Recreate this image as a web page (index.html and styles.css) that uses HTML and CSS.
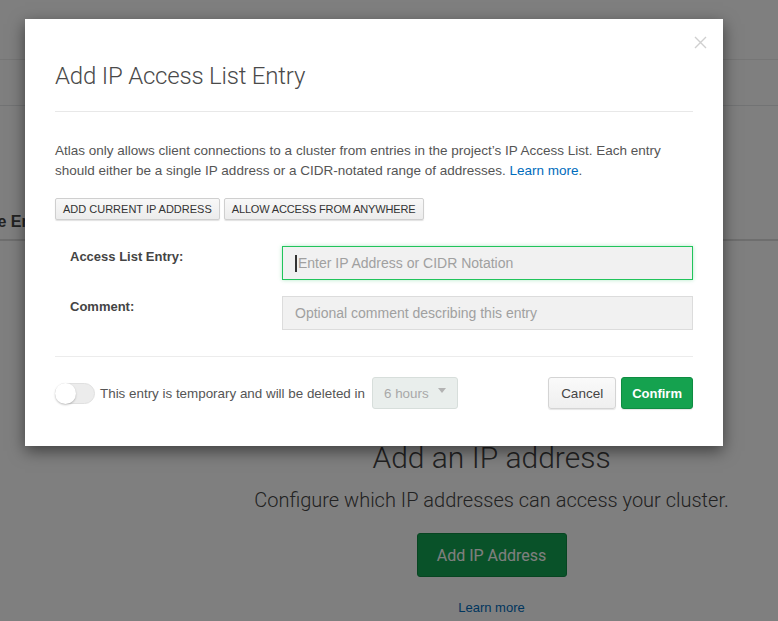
FILE: index.html
```html
<!DOCTYPE html>
<html lang="en">
  <head>
    <meta charset="UTF-8" />
    <meta name="viewport" content="width=device-width, initial-scale=1.0" />
    <title>Network Access</title>
    <link rel="stylesheet" href="styles.css">
  </head>
  <body>
    <div class="page">
      <div class="topbar"></div>
      <div class="subbar"></div>
      <div class="tabs">
        <span class="tab">Private Endpoint</span>
      </div>
      <section class="empty">
        <h2>Add an IP address</h2>
        <p>Configure which IP addresses can access your cluster.</p>
        <button class="big-btn">Add IP Address</button>
        <a href="#" class="empty-link">Learn more</a>
      </section>
    </div>

    <div class="backdrop"></div>

    <div class="modal">
      <button class="close" aria-label="Close">
        <svg width="13" height="13" viewBox="0 0 13 13">
          <path d="M1 1 L12 12 M12 1 L1 12" stroke="#cfcfcf" stroke-width="1.4" fill="none" />
        </svg>
      </button>
      <header class="modal-head">
        <h1>Add IP Access List Entry</h1>
      </header>
      <div class="modal-body">
        <p class="intro">
          Atlas only allows client connections to a cluster from entries in the project’s IP Access List. Each entry
          should either be a single IP address or a CIDR-notated range of addresses. <a href="#">Learn more</a>.
        </p>
        <div class="quick">
          <button class="small-btn">Add current IP address</button>
          <button class="small-btn">Allow access from anywhere</button>
        </div>
        <div class="field">
          <label for="entry">Access List Entry:</label>
          <div class="input focus"><span class="caret"></span><span class="ph">Enter IP Address or CIDR Notation</span></div>
        </div>
        <div class="field">
          <label for="comment">Comment:</label>
          <div class="input"><span class="ph">Optional comment describing this entry</span></div>
        </div>
      </div>
      <footer class="modal-foot">
        <div class="temp">
          <span class="toggle"><span class="knob"></span></span>
          <span class="temp-text">This entry is temporary and will be deleted in</span>
          <span class="select">6 hours <span class="arrow"></span></span>
        </div>
        <div class="actions">
          <button class="btn">Cancel</button>
          <button class="btn primary">Confirm</button>
        </div>
      </footer>
    </div>
  </body>
</html>
```

FILE: styles.css
```css
* {
  box-sizing: border-box;
  margin: 0;
}
html,
body {
  height: 100%;
}
body {
  font-family: "Liberation Sans", Arial, sans-serif;
  background: #fff;
  overflow: hidden;
  position: relative;
}
button {
  font-family: inherit;
  cursor: pointer;
}

/* page behind the modal */
.topbar {
  height: 60px;
  border-bottom: 1px solid #ececec;
}
.subbar {
  height: 46px;
  border-bottom: 1px solid #e4e6e8;
}
.tabs {
  height: 135px;
  display: flex;
  align-items: flex-end;
  border-bottom: 2px solid #dcdcdc;
  padding-bottom: 8px;
}
.tab {
  margin-left: -47px;
  font-size: 16px;
  font-weight: bold;
  color: #444;
  white-space: nowrap;
}
.empty {
  padding-left: 205px;
  padding-top: 199px;
  display: flex;
  flex-direction: column;
  align-items: center;
  text-align: center;
}
.empty h2 {
  font-family: Roboto, sans-serif;
  font-weight: 300;
  font-size: 30px;
  color: #444;
  line-height: 36px;
}
.empty p {
  font-family: Roboto, sans-serif;
  font-weight: 300;
  font-size: 20px;
  color: #444;
  margin-top: 12px;
}
.big-btn {
  margin-top: 21px;
  width: 150px;
  height: 44px;
  background: #13a552;
  border: 1px solid #0f8a43;
  border-radius: 3px;
  color: #fff;
  font-family: Roboto, sans-serif;
  font-size: 16px;
}
.empty-link {
  margin-top: 23px;
  font-size: 13px;
  color: #006cbc;
  text-decoration: none;
}

.backdrop {
  position: absolute;
  inset: 0;
  background: rgba(0, 0, 0, 0.5);
}

/* modal */
.modal {
  position: absolute;
  top: 19px;
  left: 25px;
  width: 698px;
  background: #fff;
  padding: 0 30px 37px;
  box-shadow: 0 5px 15px rgba(0, 0, 0, 0.5);
}
.close {
  position: absolute;
  top: 17px;
  right: 16px;
  border: 0;
  background: none;
  padding: 0;
  line-height: 0;
}
.modal-head {
  padding-top: 42px;
  padding-bottom: 20px;
  border-bottom: 1px solid #e8e8e8;
}
.modal-head h1 {
  font-family: Roboto, sans-serif;
  font-weight: 300;
  font-size: 24px;
  letter-spacing: -0.2px;
  line-height: 30px;
  color: #4a4a4a;
}
.modal-body {
  padding-top: 29px;
  padding-bottom: 26px;
  border-bottom: 1px solid #ececec;
}
.intro {
  font-size: 13.5px;
  line-height: 20px;
  color: #555;
}
.intro a {
  color: #006cbc;
  text-decoration: none;
}
.quick {
  display: flex;
  gap: 4px;
  margin-top: 17px;
  margin-bottom: 26px;
}
.small-btn {
  height: 22px;
  padding: 0 7px;
  font-size: 11px;
  text-transform: uppercase;
  color: #333;
  background: linear-gradient(#f8f8f8, #ececec);
  border: 1px solid #cfcfcf;
  border-radius: 2px;
  box-shadow: 0 1px 1px rgba(0, 0, 0, 0.12);
}
.small-btn + .small-btn {
  letter-spacing: -0.15px;
}
.field {
  display: flex;
}
.field + .field {
  margin-top: 16px;
}
.field label {
  width: 227px;
  padding-left: 15px;
  padding-top: 3px;
  font-size: 13px;
  font-weight: bold;
  color: #444;
}
.input {
  flex: 1;
  height: 34px;
  display: flex;
  align-items: center;
  padding-left: 12px;
  background: #f1f1f1;
  border: 1px solid #dcdcdc;
  font-size: 14px;
}
.input.focus {
  border-color: #21c45b;
  box-shadow: 0 0 4px rgba(33, 196, 91, 0.35);
}
.caret {
  width: 2px;
  height: 17px;
  background: #333;
  margin-right: 1px;
}
.ph {
  color: #a0a0a0;
}
.modal-foot {
  padding-top: 20px;
  display: flex;
  align-items: center;
  justify-content: space-between;
}
.temp {
  display: flex;
  align-items: center;
}
.toggle {
  width: 40px;
  height: 21px;
  border-radius: 11px;
  background: #ececec;
  border: 1px solid #e0e0e0;
  position: relative;
}
.knob {
  position: absolute;
  top: -1px;
  left: -1px;
  width: 21px;
  height: 21px;
  border-radius: 50%;
  background: #fff;
  box-shadow: 0 1px 2px rgba(0, 0, 0, 0.25);
}
.temp-text {
  margin-left: 5px;
  font-size: 13.4px;
  color: #555;
}
.select {
  margin-left: 7px;
  width: 86px;
  height: 32px;
  display: flex;
  align-items: center;
  padding-left: 11px;
  background: #e9eeec;
  border: 1px solid #d7dedb;
  border-radius: 3px;
  font-size: 13.4px;
  color: #a8a8a8;
  position: relative;
}
.arrow {
  position: absolute;
  right: 11px;
  top: 10px;
  border-left: 4px solid transparent;
  border-right: 4px solid transparent;
  border-top: 5px solid #b3b3b3;
}
.actions {
  display: flex;
  gap: 5px;
}
.btn {
  height: 32px;
  padding: 0 12px;
  font-size: 13.5px;
  color: #444;
  background: linear-gradient(#fafafa, #efefef);
  border: 1px solid #d4d4d4;
  border-radius: 3px;
  box-shadow: 0 1px 1px rgba(0, 0, 0, 0.1);
}
.btn.primary {
  padding: 0 10px;
  font-size: 13px;
  color: #fff;
  font-weight: bold;
  background: #15a24f;
  border-color: #0f8c42;
}
```
